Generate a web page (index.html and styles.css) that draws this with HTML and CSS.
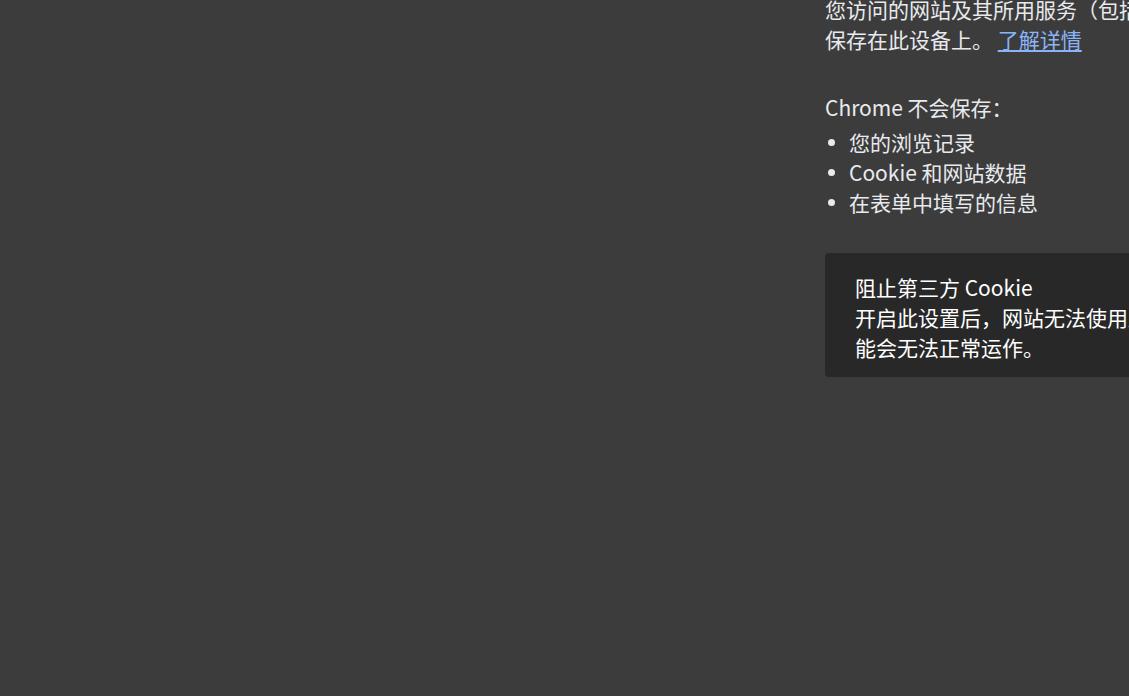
FILE: index.html
```html
<!DOCTYPE html>
<html lang="zh-CN">
<head>
<meta charset="utf-8">
<title>无痕模式</title>
<link rel="stylesheet" href="styles.css">
</head>
<body>
<main class="content">
  <p class="intro">您访问的网站及其所用服务（包括 Google）仍可看到您的活动，您下载的文件和书签将<br>保存在此设备上。 <a class="learn" href="#">了解详情</a></p>
  <p class="heading">Chrome 不会保存：</p>
  <ul class="list">
    <li>您的浏览记录</li>
    <li>Cookie 和网站数据</li>
    <li>在表单中填写的信息</li>
  </ul>
  <section class="card">
    <div class="card-title">阻止第三方 Cookie</div>
    <div class="card-text">开启此设置后，网站无法使用跟踪您在网络上的浏览活动的 Cookie。某些网站上的功能可<br>能会无法正常运作。</div>
  </section>
</main>
</body>
</html>
```
FILE: styles.css
```css
html, body {
  margin: 0;
  padding: 0;
  height: 100%;
  overflow: hidden;
  background: #3c3c3c;
}
body {
  font-family: "Noto Sans CJK SC", "Noto Sans", sans-serif;
  font-size: 21px;
  line-height: 30px;
  color: #e8eaed;
}
.content {
  width: 600px;
  margin: -6px 0 0 825px;
}
.intro {
  margin: 0;
  white-space: nowrap;
}
.learn {
  color: #8ab4f8;
  text-decoration: underline;
}
.heading {
  margin: 38px 0 0;
}
.list {
  list-style: none;
  margin: 5px 0 0;
  padding: 0;
}
.list li {
  display: flex;
  align-items: center;
}
.list li::before {
  content: "";
  width: 7px;
  height: 7px;
  border-radius: 50%;
  background: #e8eaed;
  margin: 0 14px 0 3px;
  flex: none;
}
.card {
  margin-top: 36px;
  background: #282828;
  border-radius: 4px;
  padding: 19px 30px 15px;
  color: #ffffff;
  white-space: nowrap;
}
```
